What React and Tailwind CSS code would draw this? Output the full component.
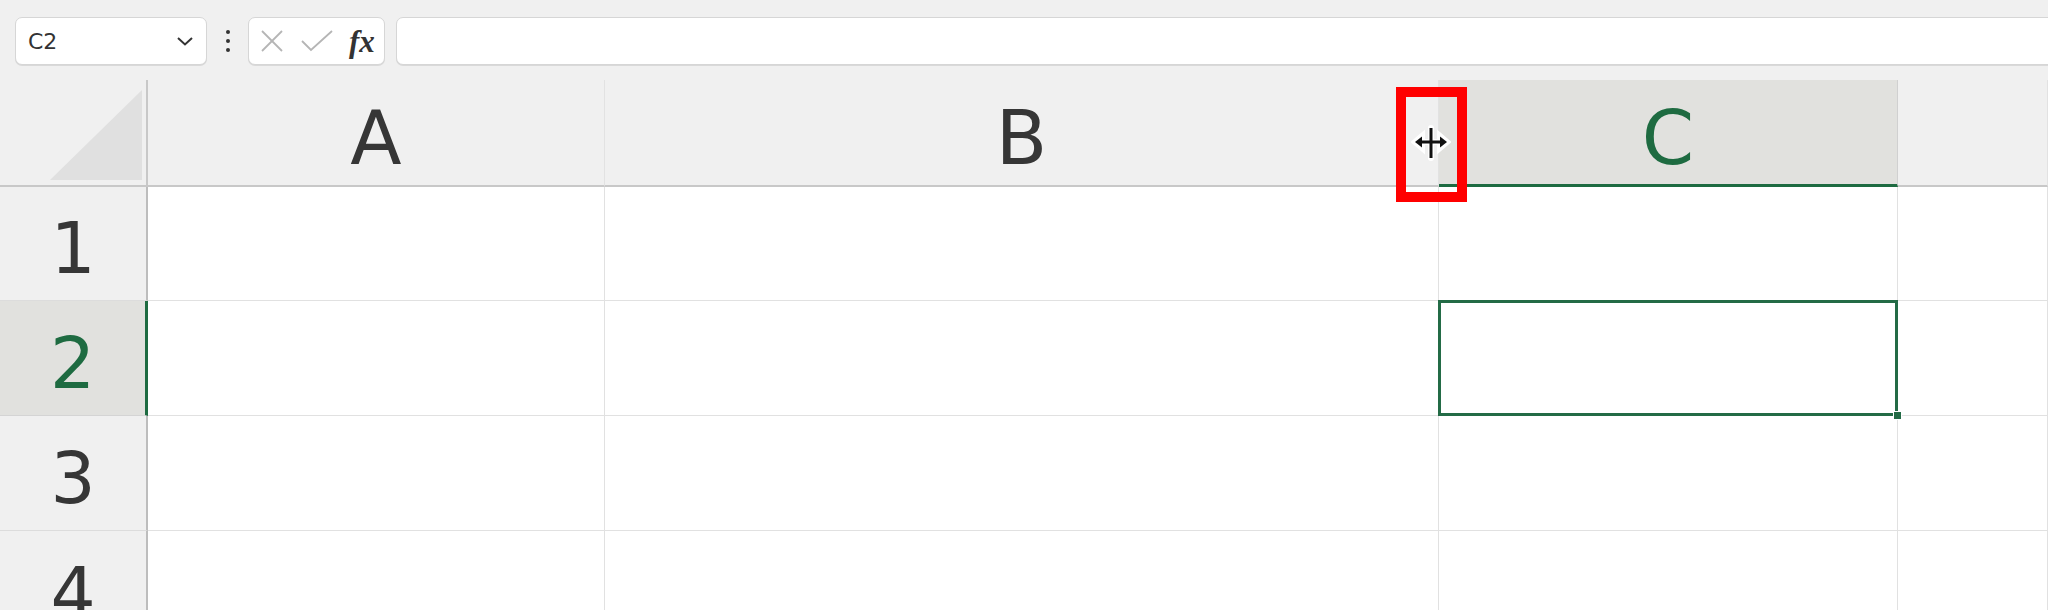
import { useState } from 'react';

const columns = ['A', 'B', 'C', 'D'];
const rows = [1, 2, 3, 4];

const GREEN = 'text-[#1e6b41]';

const ResizeCursor = () => (
  <svg width="40" height="40" viewBox="0 0 40 40" className="absolute left-[1411px] top-[122px] z-30">
    {/* white halo */}
    <g stroke="#ffffff" strokeWidth="6" strokeLinecap="round" fill="#ffffff">
      <line x1="8" y1="20" x2="32" y2="20" />
      <line x1="20" y1="6" x2="20" y2="36" />
      <polygon points="4,20 11,14 11,26" />
      <polygon points="36,20 29,14 29,26" />
    </g>
    <g fill="#111111">
      <rect x="8" y="18.5" width="24" height="3" />
      <rect x="18.5" y="6" width="3" height="30" />
      <polygon points="4,20 11,14.5 11,25.5" />
      <polygon points="36,20 29,14.5 29,25.5" />
    </g>
  </svg>
);

const Toolbar = () => (
  <div className="flex h-[80px] items-start pt-[17px] pl-[15px]">
    {/* name box */}
    <div className="flex h-[48px] w-[192px] items-center justify-between rounded-[7px] border border-[#d6d6d6] bg-white pl-[12px] pr-[12px] shadow-[0_1px_0_#d9d9d9]">
      <span className="text-[22px] text-[#333333]">C2</span>
      <svg width="18" height="12" viewBox="0 0 18 12">
        <polyline points="2,3 9,9.5 16,3" fill="none" stroke="#333333" strokeWidth="2" />
      </svg>
    </div>

    {/* more dots */}
    <div className="flex h-[48px] w-[41px] flex-col items-center justify-center gap-[5px]">
      <span className="h-[4px] w-[4px] rounded-full bg-[#333333]" />
      <span className="h-[4px] w-[4px] rounded-full bg-[#333333]" />
      <span className="h-[4px] w-[4px] rounded-full bg-[#333333]" />
    </div>

    {/* cancel / enter / fx */}
    <div className="flex h-[48px] w-[137px] items-center rounded-[7px] border border-[#d6d6d6] bg-white pl-[11px] shadow-[0_1px_0_#d9d9d9]">
      <svg width="24" height="24" viewBox="0 0 24 24">
        <line x1="2" y1="2" x2="22" y2="22" stroke="#b5b5b5" strokeWidth="1.8" />
        <line x1="22" y1="2" x2="2" y2="22" stroke="#b5b5b5" strokeWidth="1.8" />
      </svg>
      <svg width="34" height="22" viewBox="0 0 34 22" className="ml-[16px]">
        <polyline points="2,11 11,20 32,1" fill="none" stroke="#b5b5b5" strokeWidth="1.8" />
      </svg>
      <span className="ml-[15px] font-['Liberation_Serif',serif] text-[31px] font-bold italic leading-none text-[#333333]">fx</span>
    </div>

    {/* formula bar */}
    <div className="ml-[11px] h-[48px] flex-1 -mr-[20px] rounded-[7px] border border-[#d6d6d6] bg-white shadow-[0_1px_0_#d9d9d9]" />
  </div>
);

const ColumnHeader = ({ label, selected }) => (
  <div
    className={
      selected
        ? `flex items-center justify-center border-r border-b-[3px] border-r-[#d0d0d0] border-b-[#1e6b41] bg-[#e1e1de] pt-[12px] text-[75px] leading-none ${GREEN}`
        : 'flex items-center justify-center border-r border-b-2 border-r-[#e2e2e2] border-b-[#c8c8c8] pt-[12px] text-[75px] leading-none text-[#363636]'
    }
  >
    {label}
  </div>
);

const RowHeader = ({ n, selected }) => (
  <div
    className={
      selected
        ? `flex items-center justify-center border-r-[3px] border-b border-r-[#1e6b41] border-b-[#d4d4d4] bg-[#e1e1de] pt-[10px] text-[71px] leading-none ${GREEN}`
        : 'flex items-center justify-center border-r-2 border-b border-r-[#bdbdbd] border-b-[#dcdcdc] pt-[10px] text-[71px] leading-none text-[#363636]'
    }
  >
    {n}
  </div>
);

const Cell = ({ active }) => (
  <div className="relative border-r border-b border-[#e1e1e1] bg-white">
    {active && (
      <>
        <div className="absolute -left-[1px] -top-[1px] -right-[1px] -bottom-[1px] z-10 border-[3px] border-[#236b46]" />
        <div className="absolute -bottom-[5px] -right-[5px] z-20 h-[9px] w-[9px] border border-white bg-[#236b46]" />
      </>
    )}
  </div>
);

export default function App() {
  const [active] = useState({ col: 'C', row: 2 });

  return (
    <div className="relative h-[610px] w-[2048px] overflow-hidden bg-[#f0f0f0] font-['DejaVu_Sans',sans-serif]">
      <Toolbar />

      {/* sheet grid */}
      <div className="grid grid-cols-[148px_457px_834px_459px_1fr] grid-rows-[107px_114px_115px_115px_115px]">
        {/* corner */}
        <div className="border-r-2 border-b-2 border-r-[#c8c8c8] border-b-[#c8c8c8]">
          <svg width="146" height="105" viewBox="0 0 146 105">
            <polygon points="50,100 142,10 142,100" fill="#e0e0e0" />
          </svg>
        </div>
        {columns.map((c) => (
          <ColumnHeader key={c} label={c === 'D' ? '' : c} selected={c === active.col} />
        ))}

        {rows.map((r) => (
          <div key={r} className="contents">
            <RowHeader n={r} selected={r === active.row} />
            {columns.map((c) => (
              <Cell key={c + r} active={c === active.col && r === active.row} />
            ))}
          </div>
        ))}
      </div>

      {/* highlight around the column border */}
      <div className="absolute left-[1396px] top-[87px] z-20 h-[115px] w-[71px] border-[10px] border-[#ff0000]" />
      <ResizeCursor />
    </div>
  );
}
